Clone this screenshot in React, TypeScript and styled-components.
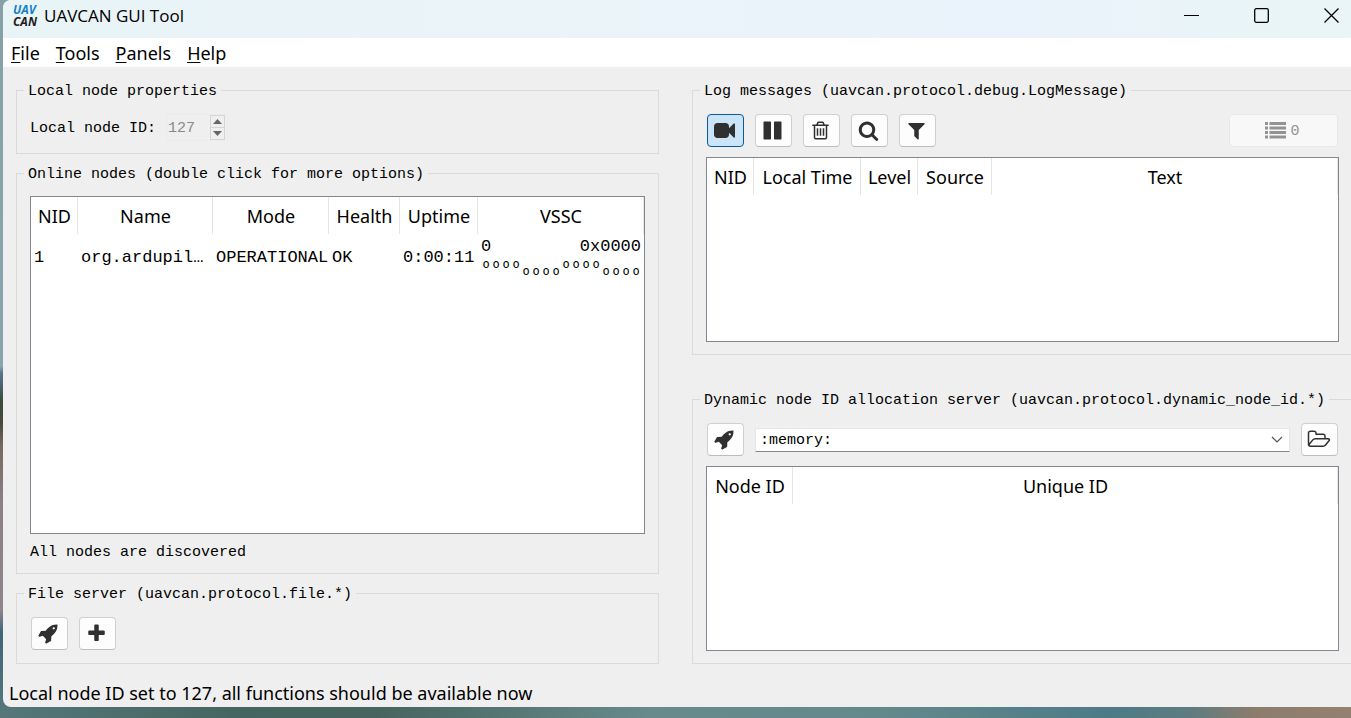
import React from 'react';
import styled, { createGlobalStyle } from 'styled-components';

const UI_FONT = '"Noto Sans", "Open Sans", sans-serif';
const FORM_FONT = '"Liberation Mono", monospace';
const CELL_FONT = '"Liberation Mono", monospace';

const GlobalStyle = createGlobalStyle`
  *, *::before, *::after { box-sizing: border-box; }
  body { margin: 0; }
  button, input, select { font: inherit; color: inherit; }
`;

/* ---------- window ---------- */

const Desktop = styled.div`
  height: 100vh;
  min-height: 560px;
  overflow: hidden;
  padding: 0 0 11px 3px;
  background:
    linear-gradient(90deg, #56777a 0%, #44655f 18%, #46655f 28%, #688a8b 48%, #64898c 65%, #4c7b87 82%, #5d7c80 88%, #8d7c6c 93%, #94806f 100%)
      bottom / 100% 11px no-repeat,
    linear-gradient(180deg, #87a0a8 0%, #8ba4ad 51%, #56748c 52%, #3a4a3c 56%, #4b4a3c 59%, #77685f 62%, #8b8085 70%, #8d868c 85%, #42647a 88%, #56777a 100%);
`;

const Window = styled.div`
  display: flex;
  flex-direction: column;
  height: 100%;
  overflow: hidden;
  border-radius: 8px 0 0 8px;
  background: #efefef;
  color: #000;
  font: 18px/24px ${UI_FONT};
`;

const TitleBar = styled.header`
  display: flex;
  align-items: center;
  flex: none;
  height: 38px;
  padding: 0 11px 6px 10px;
  background: linear-gradient(90deg, #e9f4f7, #eaf4f9 40%, #eaf3fb 75%, #e9f5f6);
`;

const Logo = styled.div`
  display: flex;
  flex-direction: column;
  width: 26px;
  margin-right: 5px;
  color: #1c1c1c;
  font: italic 700 12px/12px "Open Sans", sans-serif;
`;

const LogoTop = styled.span`
  color: #1583c4;
`;

const Title = styled.h1`
  flex: 1;
  margin: 0;
  font: 400 17px/24px "Open Sans", sans-serif;
`;

const WindowButtons = styled.div`
  display: flex;
  gap: 54px;
`;

const WindowButton = styled.button`
  display: flex;
  padding: 0;
  border: 0;
  background: none;
`;

const MenuBar = styled.nav`
  display: flex;
  align-items: center;
  flex: none;
  gap: 16px;
  height: 29px;
  padding: 0 8px;
  background: #fff;
`;

const MenuItem = styled.button`
  padding: 0;
  border: 0;
  background: none;
  line-height: 24px;
`;

const Mnemonic = styled.span`
  text-decoration: underline;
  text-decoration-thickness: 1px;
  text-underline-offset: 2px;
`;

const Content = styled.main`
  display: grid;
  grid-template-columns: 643fr 659fr;
  column-gap: 33px;
  flex: 1;
  min-height: 0;
  padding: 13px 0 16px 13px;
`;

const Column = styled.div<{ $gap: number }>`
  display: flex;
  flex-direction: column;
  gap: ${(p) => p.$gap}px;
  min-width: 0;
  min-height: 0;
`;

const StatusBar = styled.footer`
  flex: none;
  height: 27px;
  padding-left: 6px;
  line-height: 26px;
`;

/* ---------- group boxes ---------- */

const Group = styled.fieldset<{ $grow?: boolean; $open?: boolean }>`
  display: flex;
  flex-direction: column;
  flex: ${(p) => (p.$grow ? '1 1 0' : 'none')};
  min-width: 0;
  min-height: 0;
  margin: 0;
  padding: 13px ${(p) => (p.$open ? 12 : 13)}px 12px 13px;
  border: 1px solid #dadada;
  border-right-width: ${(p) => (p.$open ? 0 : 1)}px;
  font: 15px/20px ${FORM_FONT};
`;

const Legend = styled.legend`
  height: 20px;
  margin-left: -6px;
  padding: 2px 4px 0;
  white-space: nowrap;
`;

const Toolbar = styled.div<{ $last?: boolean }>`
  display: flex;
  align-items: center;
  gap: 11px;
  padding: 1px 1px ${(p) => (p.$last ? 1 : 10)}px;
`;

const ToolButton = styled.button<{ $on?: boolean }>`
  display: flex;
  align-items: center;
  justify-content: center;
  flex: none;
  width: 37px;
  height: 33px;
  padding: 0 2px 0 0;
  border: 1px solid ${(p) => (p.$on ? '#0a5a9c' : '#d0d0d0')};
  border-bottom-color: ${(p) => (p.$on ? '#0a5a9c' : '#bcbcbc')};
  border-radius: 4px;
  background: ${(p) => (p.$on ? '#cce4f7' : '#fdfdfd')};
  color: #303030;
`;

const CountButton = styled(ToolButton)`
  gap: 4px;
  width: 109px;
  margin-left: auto;
  border-color: #e8e8e8;
  background: #f8f8f8;
  color: #929292;
`;

const Count = styled.span`
  padding-top: 2px;
`;

const Field = styled.div`
  display: flex;
  align-items: center;
  padding-top: 1px;
`;

const FieldLabel = styled.label`
  padding-top: 2px;
`;

const SpinBox = styled.div`
  display: flex;
  align-items: center;
  width: 62px;
  height: 27px;
  margin-left: 10px;
  padding-right: 2px;
  border: 1px solid #ebebeb;
  color: #8a8a8a;
`;

const SpinInput = styled.input`
  flex: 1;
  min-width: 0;
  padding: 2px 0 0 1px;
  border: 0;
  background: none;
  appearance: textfield;
  &::-webkit-inner-spin-button { appearance: none; margin: 0; }
  &:disabled { color: #8a8a8a; }
`;

const SpinButtons = styled.div`
  display: flex;
  flex-direction: column;
  width: 15px;
  border: 1px solid #d5d5d5;
`;

const SpinButton = styled.button`
  display: flex;
  align-items: center;
  justify-content: center;
  height: 11px;
  padding: 0;
  border: 0;
  background: none;
  & + & { height: 12px; border-top: 1px solid #d5d5d5; }
`;

const Note = styled.p`
  margin: 0;
  padding-top: 11px;
  line-height: 16px;
`;

const Combo = styled.div`
  position: relative;
  flex: 1;
  min-width: 0;
  height: 24px;
`;

const ComboSelect = styled.select`
  appearance: none;
  width: 100%;
  height: 24px;
  padding: 2px 32px 0 4px;
  border: 1px solid #e6e6e6;
  border-bottom-color: #868686;
  border-radius: 1px;
  background: #fff;
`;

const ComboArrow = styled.svg`
  position: absolute;
  right: 7px;
  top: 8px;
  pointer-events: none;
`;

/* ---------- tables ---------- */

const Frame = styled.div`
  flex: 1;
  min-height: 0;
  overflow: hidden;
  border: 1px solid #828790;
  background: #fff;
`;

const Table = styled.table`
  width: 100%;
  table-layout: fixed;
  border-collapse: collapse;
`;

const Head = styled.th<{ $width?: number }>`
  width: ${(p) => (p.$width ? `${p.$width}px` : 'auto')};
  height: 37px;
  padding: 0;
  box-shadow: inset -1px 0 #e5e5e5;
  font: 400 18px/24px ${UI_FONT};
  white-space: nowrap;
`;

const Cell = styled.td`
  height: 46px;
  padding: 2px 0 0 3px;
  white-space: nowrap;
  font: 17px/20px ${CELL_FONT};
`;

const StatusCode = styled.div`
  padding-right: 3px;
`;

const CodeLine = styled.div`
  display: flex;
  justify-content: space-between;
  line-height: 18px;
`;

const BitLine = styled.div`
  display: grid;
  grid-template-columns: repeat(16, 1fr);
  height: 22px;
  padding-top: 1px;
  text-align: center;
  font: 12px/14px "DejaVu Sans Mono", monospace;
`;

const Bit = styled.span<{ $low: boolean }>`
  align-self: ${(p) => (p.$low ? 'end' : 'start')};
`;

/* ---------- icons ---------- */

const ICONS = {
  camera:
    'M1792 352v1088q0 42-39 59-13 5-25 5-27 0-45-19l-403-403v166q0 119-84.5 203.5t-203.5 84.5h-704q-119 0-203.5-84.5t-84.5-203.5v-704q0-119 84.5-203.5t203.5-84.5h704q119 0 203.5 84.5t84.5 203.5v165l403-402q18-19 45-19 12 0 25 5 39 17 39 59z',
  pause:
    'M1664 192v1408q0 26-19 45t-45 19h-512q-26 0-45-19t-19-45v-1408q0-26 19-45t45-19h512q26 0 45 19t19 45zm-896 0v1408q0 26-19 45t-45 19h-512q-26 0-45-19t-19-45v-1408q0-26 19-45t45-19h512q26 0 45 19t19 45z',
  trash:
    'M704 736v576q0 14-9 23t-23 9h-64q-14 0-23-9t-9-23v-576q0-14 9-23t23-9h64q14 0 23 9t9 23zm256 0v576q0 14-9 23t-23 9h-64q-14 0-23-9t-9-23v-576q0-14 9-23t23-9h64q14 0 23 9t9 23zm256 0v576q0 14-9 23t-23 9h-64q-14 0-23-9t-9-23v-576q0-14 9-23t23-9h64q14 0 23 9t9 23zm128 724v-948h-896v948q0 22 7 40.5t14.5 27 10.5 8.5h832q3 0 10.5-8.5t14.5-27 7-40.5zm-672-1076h448l-48-117q-7-9-17-11h-317q-10 2-17 11zm928 32v64q0 14-9 23t-23 9h-96v948q0 83-47 143.5t-113 60.5h-832q-66 0-113-58.5t-47-141.5v-952h-96q-14 0-23-9t-9-23v-64q0-14 9-23t23-9h309l70-167q15-37 54-63t79-26h320q40 0 79 26t54 63l70 167h309q14 0 23 9t9 23z',
  search:
    'M1216 832q0-185-131.5-316.5t-316.5-131.5-316.5 131.5-131.5 316.5 131.5 316.5 316.5 131.5 316.5-131.5 131.5-316.5zm512 832q0 52-38 90t-90 38q-54 0-90-38l-343-342q-179 124-399 124-143 0-273.5-55.5t-225-150-150-225-55.5-273.5 55.5-273.5 150-225 225-150 273.5-55.5 273.5 55.5 225 150 150 225 55.5 273.5q0 220-124 399l343 343q37 37 37 90z',
  filter:
    'M1595 295q17 41-14 70l-493 493v742q0 42-39 59-13 5-25 5-27 0-45-19l-256-256q-19-19-19-45v-486l-493-493q-31-29-14-70 17-39 59-39h1280q42 0 59 39z',
  list:
    'M0 180h256v256h-256zM0 564h256v256h-256zM0 948h256v256h-256zM0 1332h256v256h-256zM384 180h1408v256h-1408zM384 564h1408v256h-1408zM384 948h1408v256h-1408zM384 1332h1408v256h-1408z',
  rocket:
    'M1440 448q0-40-28-68t-68-28-68 28-28 68 28 68 68 28 68-28 28-68zm224-288q0 249-75.5 430.5t-253.5 360.5q-81 80-195 176l-20 379q-2 16-16 26l-384 224q-7 4-16 4-12 0-23-9l-64-64q-13-14-8-32l85-276-281-281-276 85q-3 1-9 1-14 0-23-9l-64-64q-17-19-5-39l224-384q10-14 26-16l379-20q96-114 176-195 188-187 358-258t431-71q14 0 24 9.5t10 22.5z',
  plus:
    'M1600 736v192q0 40-28 68t-68 28h-416v416q0 40-28 68t-68 28h-192q-40 0-68-28t-28-68v-416h-416q-40 0-68-28t-28-68v-192q0-40 28-68t68-28h416v-416q0-40 28-68t68-28h192q40 0 68 28t28 68v416h416q40 0 68 28t28 68z',
  folder:
    'M1845 931q0-35-53-35h-1088q-40 0-85.5 21.5t-71.5 52.5l-294 363q-18 24-18 40 0 35 53 35h1088q40 0 86-22t71-53l294-363q18-22 18-39zm-1141-163h768v-160q0-40-28-68t-68-28h-576q-40 0-68-28t-28-68v-64q0-40-28-68t-68-28h-320q-40 0-68 28t-28 68v853l256-315q44-53 116-87.5t140-34.5zm1269 163q0 62-46 120l-295 363q-43 53-116 87.5t-140 34.5h-1088q-92 0-158-66t-66-158v-960q0-92 66-158t158-66h320q92 0 158 66t66 158v32h544q92 0 158 66t66 158v160h192q54 0 99 24.5t67 70.5q15 32 15 68z',
};

function Icon({ name }: { name: keyof typeof ICONS }) {
  const wide = name === 'folder';
  return (
    <svg width={wide ? 24 : 21} height={21} viewBox={wide ? '0 0 2048 1792' : '0 0 1792 1792'} fill="currentColor" aria-hidden="true">
      <path d={ICONS[name]} />
    </svg>
  );
}

function Arrow({ d }: { d: string }) {
  return (
    <svg width="9" height="5" viewBox="0 0 9 5" fill="#666" aria-hidden="true">
      <path d={d} />
    </svg>
  );
}

function WindowGlyph({ children }: { children: React.ReactNode }) {
  return (
    <svg width="16" height="16" viewBox="0 0 16 16" fill="none" stroke="#000" strokeWidth="1.3" aria-hidden="true">
      {children}
    </svg>
  );
}

/* ---------- data ---------- */

const MENUS = ['File', 'Tools', 'Panels', 'Help'];

const LOG_TOOLS: { name: keyof typeof ICONS; label: string; on?: boolean }[] = [
  { name: 'camera', label: 'Capture', on: true },
  { name: 'pause', label: 'Pause' },
  { name: 'trash', label: 'Clear' },
  { name: 'search', label: 'Search' },
  { name: 'filter', label: 'Filter' },
];

type ColumnDef = [title: string, width?: number];

const NODE_COLUMNS: ColumnDef[] = [['NID', 47], ['Name', 135], ['Mode', 116], ['Health', 71], ['Uptime', 78], ['VSSC']];
const LOG_COLUMNS: ColumnDef[] = [['NID', 47], ['Local Time', 107], ['Level', 57], ['Source', 74], ['Text']];
const ALLOCATION_COLUMNS: ColumnDef[] = [['Node ID', 86], ['Unique ID']];

function HeadRow({ columns }: { columns: ColumnDef[] }) {
  return (
    <thead>
      <tr>
        {columns.map(([title, width]) => (
          <Head key={title} scope="col" $width={width}>{title}</Head>
        ))}
      </tr>
    </thead>
  );
}

export default function App() {
  return (
    <Desktop>
      <GlobalStyle />
      <Window>
        <TitleBar>
          <Logo>
            <LogoTop>UAV</LogoTop>
            <span>CAN</span>
          </Logo>
          <Title>UAVCAN GUI Tool</Title>
          <WindowButtons>
            <WindowButton aria-label="Minimize">
              <WindowGlyph><path d="M0 7.5h15" strokeWidth="1" /></WindowGlyph>
            </WindowButton>
            <WindowButton aria-label="Maximize">
              <WindowGlyph><rect x="0.7" y="0.7" width="13.6" height="13.6" rx="1.5" /></WindowGlyph>
            </WindowButton>
            <WindowButton aria-label="Close">
              <WindowGlyph><path d="M0.5 0.5l14 14M14.5 0.5L0.5 14.5" /></WindowGlyph>
            </WindowButton>
          </WindowButtons>
        </TitleBar>

        <MenuBar>
          {MENUS.map((menu) => (
            <MenuItem key={menu}>
              <Mnemonic>{menu[0]}</Mnemonic>
              {menu.slice(1)}
            </MenuItem>
          ))}
        </MenuBar>

        <Content>
          <Column $gap={9}>
            <Group>
              <Legend>Local node properties</Legend>
              <Field>
                <FieldLabel htmlFor="node-id">Local node ID:</FieldLabel>
                <SpinBox>
                  <SpinInput id="node-id" type="number" defaultValue={127} disabled />
                  <SpinButtons>
                    <SpinButton aria-label="Increase"><Arrow d="M0 5L4.5 0L9 5z" /></SpinButton>
                    <SpinButton aria-label="Decrease"><Arrow d="M0 0L4.5 5L9 0z" /></SpinButton>
                  </SpinButtons>
                </SpinBox>
              </Field>
            </Group>

            <Group $grow>
              <Legend>Online nodes (double click for more options)</Legend>
              <Frame>
                <Table>
                  <HeadRow columns={NODE_COLUMNS} />
                  <tbody>
                    <tr>
                      <Cell>1</Cell>
                      <Cell>org.ardupil…</Cell>
                      <Cell>OPERATIONAL</Cell>
                      <Cell>OK</Cell>
                      <Cell>0:00:11</Cell>
                      <Cell>
                        <StatusCode>
                          <CodeLine>
                            <span>0</span>
                            <span>0x0000</span>
                          </CodeLine>
                          <BitLine>
                            {Array.from({ length: 16 }, (_, i) => (
                              <Bit key={i} $low={Math.floor(i / 4) % 2 === 1}>o</Bit>
                            ))}
                          </BitLine>
                        </StatusCode>
                      </Cell>
                    </tr>
                  </tbody>
                </Table>
              </Frame>
              <Note>All nodes are discovered</Note>
            </Group>

            <Group>
              <Legend>File server (uavcan.protocol.file.*)</Legend>
              <Toolbar $last>
                <ToolButton aria-label="Start file server"><Icon name="rocket" /></ToolButton>
                <ToolButton aria-label="Add path"><Icon name="plus" /></ToolButton>
              </Toolbar>
            </Group>
          </Column>

          <Column $gap={34}>
            <Group $grow $open>
              <Legend>Log messages (uavcan.protocol.debug.LogMessage)</Legend>
              <Toolbar>
                {LOG_TOOLS.map((tool) => (
                  <ToolButton key={tool.name} aria-label={tool.label} $on={tool.on}>
                    <Icon name={tool.name} />
                  </ToolButton>
                ))}
                <CountButton disabled>
                  <Icon name="list" />
                  <Count>0</Count>
                </CountButton>
              </Toolbar>
              <Frame>
                <Table><HeadRow columns={LOG_COLUMNS} /></Table>
              </Frame>
            </Group>

            <Group $grow $open>
              <Legend>Dynamic node ID allocation server (uavcan.protocol.dynamic_node_id.*)</Legend>
              <Toolbar>
                <ToolButton aria-label="Start allocation server"><Icon name="rocket" /></ToolButton>
                <Combo>
                  <ComboSelect aria-label="Database file">
                    <option>:memory:</option>
                  </ComboSelect>
                  <ComboArrow width="12" height="8" viewBox="0 0 12 8" fill="none" stroke="#555" strokeWidth="1.2">
                    <path d="M1 1l5 5 5-5" />
                  </ComboArrow>
                </Combo>
                <ToolButton aria-label="Open database"><Icon name="folder" /></ToolButton>
              </Toolbar>
              <Frame>
                <Table><HeadRow columns={ALLOCATION_COLUMNS} /></Table>
              </Frame>
            </Group>
          </Column>
        </Content>

        <StatusBar>Local node ID set to 127, all functions should be available now</StatusBar>
      </Window>
    </Desktop>
  );
}
